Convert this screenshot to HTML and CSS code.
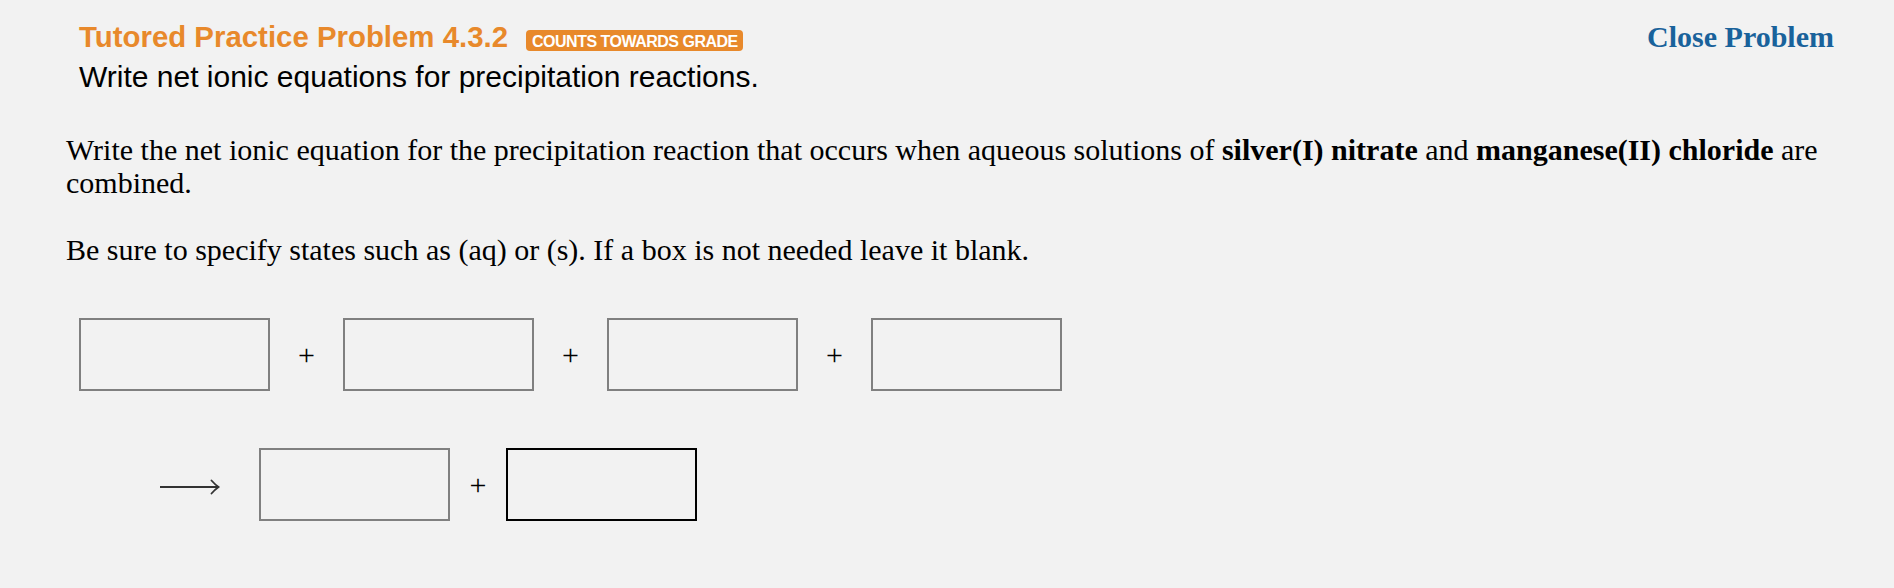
FILE: index.html
```html
<!DOCTYPE html>
<html lang="en">
<head>
<meta charset="utf-8">
<title>Tutored Practice Problem 4.3.2</title>
<link rel="stylesheet" href="styles.css">
</head>
<body>
<div class="page">
  <header class="header">
    <div class="heading">
      <div class="title-row">
        <h1 class="title">Tutored Practice Problem 4.3.2</h1>
        <span class="badge">COUNTS TOWARDS GRADE</span>
      </div>
      <p class="subtitle">Write net ionic equations for precipitation reactions.</p>
    </div>
    <a class="close" href="#">Close Problem</a>
  </header>

  <main class="content">
    <p class="para first">Write the net ionic equation for the precipitation reaction that occurs when aqueous solutions of <b>silver(I) nitrate</b> and <b>manganese(II) chloride</b> are combined.</p>
    <p class="para">Be sure to specify states such as (aq) or (s). If a box is not needed leave it blank.</p>

    <div class="eq-row reactants">
      <input class="box" type="text">
      <span class="plus">+</span>
      <input class="box" type="text">
      <span class="plus">+</span>
      <input class="box" type="text">
      <span class="plus">+</span>
      <input class="box" type="text">
    </div>

    <div class="eq-row products">
      <svg class="arrow" width="60" height="16" viewBox="0 0 60 16" aria-hidden="true">
        <line x1="0" y1="8" x2="58" y2="8" stroke="#333" stroke-width="1.8"/>
        <path d="M51.5 1.5 Q55 5.5 58.6 8 Q55 10.5 51.5 14.5" fill="none" stroke="#333" stroke-width="1.8" stroke-linecap="round"/>
      </svg>
      <input class="box" type="text">
      <span class="plus narrow">+</span>
      <input class="box active" type="text">
    </div>
  </main>
</div>
</body>
</html>
```

FILE: styles.css
```css
html, body {
  margin: 0;
  padding: 0;
  background: #f2f2f2;
}

.page {
  width: 1894px;
  min-height: 588px;
  box-sizing: border-box;
  color: #000;
}

.header {
  display: flex;
  justify-content: space-between;
  align-items: flex-start;
  padding: 20px 60px 0 79px;
}

.title-row {
  display: flex;
  align-items: baseline;
  gap: 18px;
}

.title {
  margin: 0;
  font-family: "Liberation Sans", Arial, sans-serif;
  font-weight: bold;
  font-size: 29.4px;
  line-height: 34px;
  color: #e8892b;
}

.badge {
  display: inline-block;
  background: #e8892b;
  color: #fff;
  font-family: "Liberation Sans", Arial, sans-serif;
  font-weight: bold;
  font-size: 16px;
  letter-spacing: -0.5px;
  line-height: 15px;
  padding: 4px 5px 2px 6px;
  border-radius: 4px;
}

.subtitle {
  margin: 6px 0 0;
  font-family: "Liberation Sans", Arial, sans-serif;
  font-size: 30px;
  line-height: 34px;
}

.close {
  font-family: "Liberation Serif", "Times New Roman", serif;
  font-weight: bold;
  font-size: 30px;
  line-height: 34px;
  color: #19629b;
  text-decoration: none;
}

.content {
  padding: 0 60px 0 66px;
}

.para {
  margin: 34px 0 0;
  font-family: "Liberation Serif", "Times New Roman", serif;
  font-size: 30px;
  line-height: 33px;
}

.para.first {
  margin-top: 39px;
}

.eq-row {
  display: flex;
  align-items: center;
}

.reactants {
  margin: 52px 0 0 13px;
}

.products {
  margin: 57px 0 0 94px;
}

.box {
  box-sizing: border-box;
  width: 191px;
  height: 73px;
  margin: 0;
  padding: 0 8px;
  border: 2px solid #808080;
  border-radius: 0;
  background: transparent;
  font-family: "Liberation Serif", "Times New Roman", serif;
  font-size: 24px;
  outline: none;
}

.box.active {
  border-color: #000;
}

.plus {
  width: 73px;
  text-align: center;
  font-family: "Liberation Serif", "Times New Roman", serif;
  font-size: 30px;
  line-height: 33px;
}

.plus.narrow {
  width: 56px;
}

.arrow {
  display: block;
  margin: 4px 39px 0 0;
}
```
